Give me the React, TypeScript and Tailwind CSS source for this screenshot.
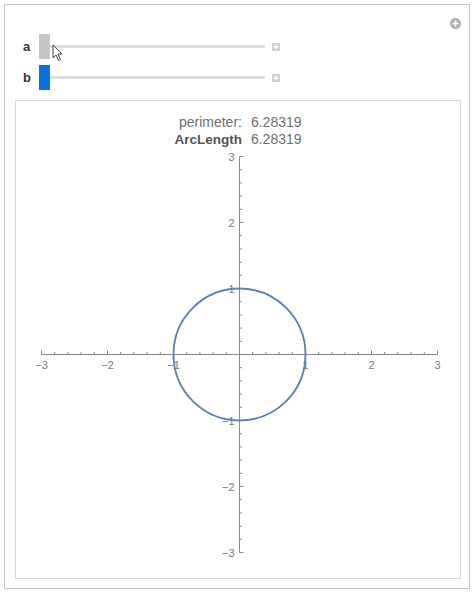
import React from "react";

const scale = 66;
const ox = 223.5;
const oy = 209.5;

const ticks: number[] = [];
for (let i = -15; i <= 15; i++) if (i !== 0) ticks.push(i / 5);

const SliderRow = ({ label, active }: { label: string; active?: boolean }) => (
  <div className="flex items-center h-[25px]">
    <span className="w-[34px] pl-[18px] text-[13px] font-bold text-[#333]">{label}</span>
    <div className="relative flex items-center w-[226px] h-[25px]">
      <div className="w-full h-[3px] bg-[#dedede]" />
      <div
        className={
          "absolute left-0 top-0 w-[11px] h-[25px] " + (active ? "bg-[#0a73d9]" : "bg-[#c6c6c6]")
        }
      />
    </div>
    <PlusSquare />
  </div>
);

const PlusSquare = () => (
  <svg width="8" height="8" viewBox="0 0 8 8" className="ml-[7px]">
    <rect x="0" y="0" width="8" height="8" fill="#cfcfcf" />
    <path d="M4 1.5v5M1.5 4h5" stroke="#fff" strokeWidth="1.3" />
  </svg>
);

const Plot = () => (
  <svg width="444" height="425" className="block">
    <g stroke="#8a8a8a" strokeWidth="1" fill="none">
      <line x1={ox - 3 * scale} y1={oy} x2={ox + 3 * scale} y2={oy} />
      <line x1={ox} y1={oy - 3 * scale} x2={ox} y2={oy + 3 * scale} />
      {ticks.map((t) => {
        const major = Number.isInteger(t);
        const len = major ? 4 : 2.5;
        return (
          <g key={t}>
            <line x1={ox + t * scale} y1={oy} x2={ox + t * scale} y2={oy - len} />
            <line x1={ox} y1={oy - t * scale} x2={ox + len} y2={oy - t * scale} />
          </g>
        );
      })}
    </g>
    <circle cx={ox} cy={oy} r={scale} fill="none" stroke="#5e81b5" strokeWidth="1.9" />
    <g fill="#7a7a7a" fontSize="11" fontFamily="'Liberation Sans', Arial, sans-serif">
      {[-3, -2, -1, 1, 2, 3].map((n) => (
        <g key={n}>
          <text x={ox + n * scale} y={oy + 14} textAnchor="middle">
            {n < 0 ? "\u2212" + -n : n}
          </text>
          <text x={ox - 5} y={oy - n * scale + 4} textAnchor="end">
            {n < 0 ? "\u2212" + -n : n}
          </text>
        </g>
      ))}
    </g>
  </svg>
);

export default function App() {
  return (
    <div className="w-[474px] h-[595px] bg-white pt-[4px] pl-[4px] font-['Liberation_Sans',Arial,sans-serif]">
      <div className="relative w-[466px] h-[585px] border border-[#c4c4c4] bg-white flex flex-col">
        <div className="flex justify-end pt-[13px] pr-[8px] h-[28px]">
          <svg width="11" height="11" viewBox="0 0 11 11">
            <circle cx="5.5" cy="5.5" r="5.5" fill="#b0b0b0" />
            <path d="M5.5 2.5v6M2.5 5.5h6" stroke="#fff" strokeWidth="1.6" />
          </svg>
        </div>
        <div className="flex flex-col gap-[6px] mt-[1px]">
          <SliderRow label="a" />
          <SliderRow label="b" active />
        </div>
        <svg width="12" height="18" viewBox="0 0 12 18" className="absolute left-[47px] top-[39px]">
          <path d="M1 1 L1 14 L4 11 L6.5 16.5 L8.5 15.5 L6 10 L10 10 Z" fill="#fff" stroke="#444" strokeWidth="1" strokeLinejoin="round" />
        </svg>
        <div className="ml-[10px] mt-[10px] w-[446px] h-[479px] border border-[#d8d8d8] bg-white flex flex-col">
          <div className="pt-[13px] grid grid-cols-[1fr_auto_auto_1fr] gap-x-[9px] text-[14px] leading-[17px] text-[#6e6e6e]">
            <span />
            <span className="text-right">perimeter:</span>
            <span>6.28319</span>
            <span />
            <span />
            <span className="text-right font-bold text-[13.5px] text-[#555]">ArcLength</span>
            <span>6.28319</span>
            <span />
          </div>
          <div className="mt-[-3px]">
            <Plot />
          </div>
        </div>
      </div>
    </div>
  );
}
